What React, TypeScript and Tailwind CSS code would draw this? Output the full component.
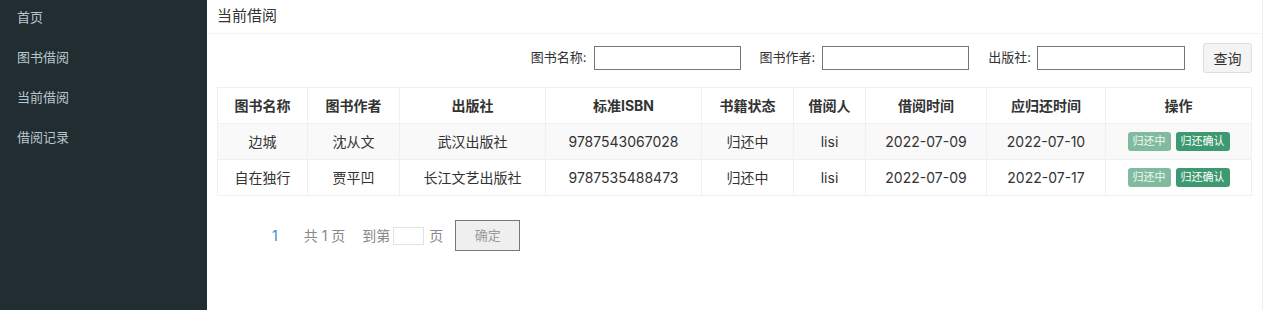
const rows = [
  { name: "边城", author: "沈从文", press: "武汉出版社", isbn: "9787543067028", status: "归还中", user: "lisi", from: "2022-07-09", to: "2022-07-10" },
  { name: "自在独行", author: "贾平凹", press: "长江文艺出版社", isbn: "9787535488473", status: "归还中", user: "lisi", from: "2022-07-09", to: "2022-07-17" },
];

const heads = ["图书名称", "图书作者", "出版社", "标准ISBN", "书籍状态", "借阅人", "借阅时间", "应归还时间", "操作"];
const widths = ["w-[90px]", "w-[92px]", "w-[146px]", "w-[156px]", "w-[92px]", "w-[72px]", "w-[121px]", "w-[119px]", "w-[146px]"];

const menu = ["首页", "图书借阅", "当前借阅", "借阅记录"];

export default function App() {
  return (
    <div className="flex h-[310px] w-[1263px] font-['Inter','Noto_Sans_CJK_SC',sans-serif] text-[#333]">
      <aside className="w-[207px] shrink-0 bg-[#222d32] pt-[7px]">
        {menu.map((m) => (
          <div key={m} className="h-10 pl-[17px] text-[13px] leading-5 text-[#b8c7ce]">
            {m}
          </div>
        ))}
      </aside>
      <main className="flex-1 border-r-2 border-[#eee] bg-white">
        <div className="h-[34px] border-b border-[#f4f4f4] pl-[10px] pt-[6px] text-[15px] leading-5">当前借阅</div>
        <div className="pl-[10px] pr-[10px]">
          <div className="mt-[9px] flex items-center justify-end text-[13px]">
            <span>图书名称:</span>
            <input className="ml-[7px] h-6 w-[147px] border border-[#767676]" />
            <span className="ml-[19px]">图书作者:</span>
            <input className="ml-[7px] h-6 w-[147px] border border-[#767676]" />
            <span className="ml-[19px]">出版社:</span>
            <input className="ml-[6px] h-6 w-[148px] border border-[#767676]" />
            <button className="ml-[18px] h-[30px] w-[49px] rounded-[3px] border border-[#ddd] bg-[#f4f4f4] text-[14px]">查询</button>
          </div>
          <table className="mt-[14px] w-[1035px] table-fixed border-collapse text-center text-[14px]">
            <thead>
              <tr className="h-[36px]">
                {heads.map((h, i) => (
                  <th key={h} className={`${widths[i]} border border-[#f0f0f0] font-bold`}>{h}</th>
                ))}
              </tr>
            </thead>
            <tbody>
              {rows.map((r, idx) => (
                <tr key={r.isbn} className={`h-[36px] ${idx === 0 ? "bg-[#f9f9f9]" : "bg-white"}`}>
                  <td className="border border-[#f0f0f0]">{r.name}</td>
                  <td className="border border-[#f0f0f0]">{r.author}</td>
                  <td className="border border-[#f0f0f0]">{r.press}</td>
                  <td className="border border-[#f0f0f0]">{r.isbn}</td>
                  <td className="border border-[#f0f0f0]">{r.status}</td>
                  <td className="border border-[#f0f0f0]">{r.user}</td>
                  <td className="border border-[#f0f0f0]">{r.from}</td>
                  <td className="border border-[#f0f0f0]">{r.to}</td>
                  <td className="border border-[#f0f0f0]">
                    <div className="flex justify-center gap-[5px]">
                      <span className="rounded-[3px] bg-[#80bb9f] px-[5px] text-[11px] leading-[19px] text-white/90">归还中</span>
                      <span className="rounded-[3px] bg-[#3d9970] px-[5px] text-[11px] leading-[19px] text-white">归还确认</span>
                    </div>
                  </td>
                </tr>
              ))}
            </tbody>
          </table>
          <div className="mt-[24px] flex items-center pl-[55px] text-[14px] text-[#888]">
            <span className="text-[#3c8dbc]">1</span>
            <span className="ml-[26px]">共 1 页</span>
            <span className="ml-[17px]">到第</span>
            <input className="ml-[3px] h-[18px] w-[31px] border border-[#e2e2e2]" />
            <span className="ml-[5px]">页</span>
            <button className="ml-[12px] h-[31px] w-[65px] border border-[#777] bg-[#efefef] text-[13px] text-[#999]">确定</button>
          </div>
        </div>
      </main>
    </div>
  );
}
